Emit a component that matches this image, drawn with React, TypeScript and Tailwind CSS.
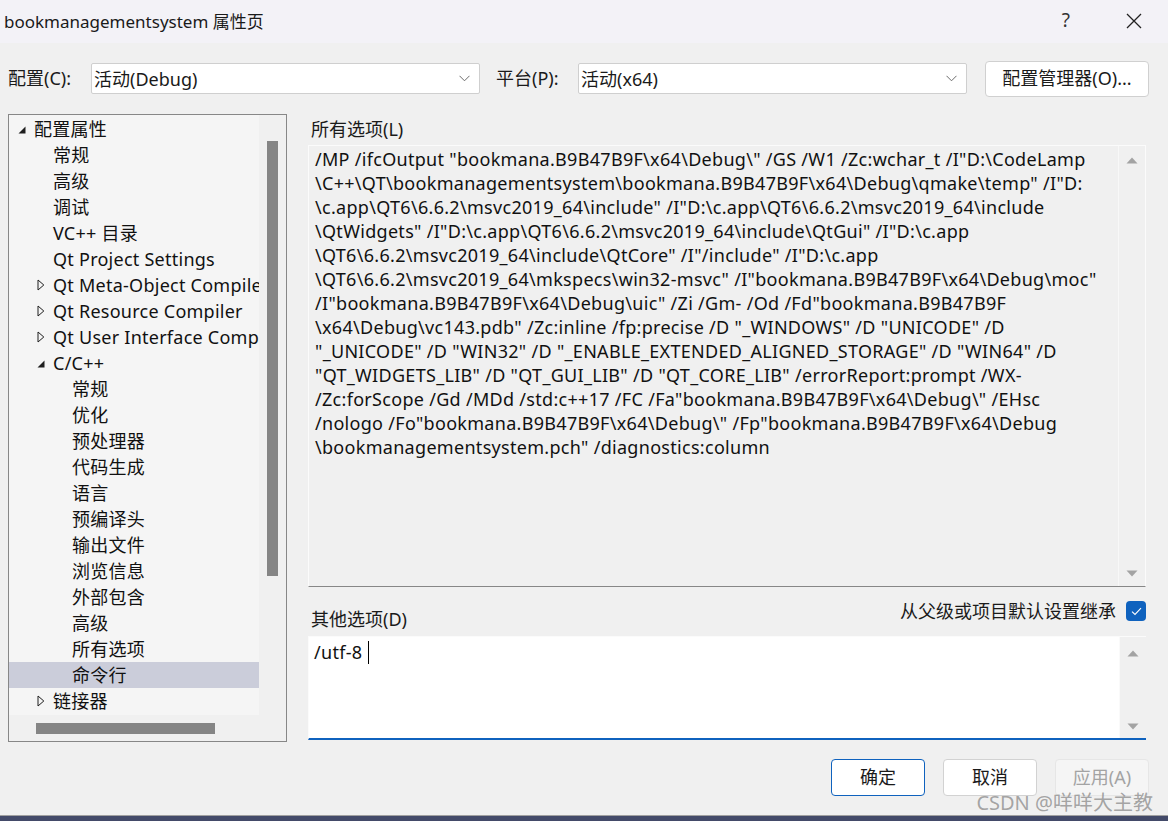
import React from "react";

// 属性页对话框 (VS 项目属性 -> C/C++ -> 命令行)
const FONT = "font-['Noto_Sans','Noto_Sans_CJK_SC',sans-serif]";

type TreeNode = {
  label: string;
  level: 0 | 1 | 2;
  arrow?: "open" | "closed";
  selected?: boolean;
};

const TREE: TreeNode[] = [
  { label: "配置属性", level: 0, arrow: "open" },
  { label: "常规", level: 1 },
  { label: "高级", level: 1 },
  { label: "调试", level: 1 },
  { label: "VC++ 目录", level: 1 },
  { label: "Qt Project Settings", level: 1 },
  { label: "Qt Meta-Object Compiler", level: 1, arrow: "closed" },
  { label: "Qt Resource Compiler", level: 1, arrow: "closed" },
  { label: "Qt User Interface Compiler", level: 1, arrow: "closed" },
  { label: "C/C++", level: 1, arrow: "open" },
  { label: "常规", level: 2 },
  { label: "优化", level: 2 },
  { label: "预处理器", level: 2 },
  { label: "代码生成", level: 2 },
  { label: "语言", level: 2 },
  { label: "预编译头", level: 2 },
  { label: "输出文件", level: 2 },
  { label: "浏览信息", level: 2 },
  { label: "外部包含", level: 2 },
  { label: "高级", level: 2 },
  { label: "所有选项", level: 2 },
  { label: "命令行", level: 2, selected: true },
  { label: "链接器", level: 1, arrow: "closed" },
];

const LEVEL_PAD: Record<number, string> = {
  0: "pl-[9px]",
  1: "pl-[28px]",
  2: "pl-[47px]",
};

const ALL_OPTIONS = [
  '/MP /ifcOutput "bookmana.B9B47B9F\\x64\\Debug\\" /GS /W1 /Zc:wchar_t /I"D:\\CodeLamp',
  '\\C++\\QT\\bookmanagementsystem\\bookmana.B9B47B9F\\x64\\Debug\\qmake\\temp" /I"D:',
  '\\c.app\\QT6\\6.6.2\\msvc2019_64\\include" /I"D:\\c.app\\QT6\\6.6.2\\msvc2019_64\\include',
  '\\QtWidgets" /I"D:\\c.app\\QT6\\6.6.2\\msvc2019_64\\include\\QtGui" /I"D:\\c.app',
  '\\QT6\\6.6.2\\msvc2019_64\\include\\QtCore" /I"/include" /I"D:\\c.app',
  '\\QT6\\6.6.2\\msvc2019_64\\mkspecs\\win32-msvc" /I"bookmana.B9B47B9F\\x64\\Debug\\moc"',
  '/I"bookmana.B9B47B9F\\x64\\Debug\\uic" /Zi /Gm- /Od /Fd"bookmana.B9B47B9F',
  '\\x64\\Debug\\vc143.pdb" /Zc:inline /fp:precise /D "_WINDOWS" /D "UNICODE" /D',
  '"_UNICODE" /D "WIN32" /D "_ENABLE_EXTENDED_ALIGNED_STORAGE" /D "WIN64" /D',
  '"QT_WIDGETS_LIB" /D "QT_GUI_LIB" /D "QT_CORE_LIB" /errorReport:prompt /WX-',
  '/Zc:forScope /Gd /MDd /std:c++17 /FC /Fa"bookmana.B9B47B9F\\x64\\Debug\\" /EHsc',
  '/nologo /Fo"bookmana.B9B47B9F\\x64\\Debug\\" /Fp"bookmana.B9B47B9F\\x64\\Debug',
  '\\bookmanagementsystem.pch" /diagnostics:column',
];

function Chevron() {
  return (
    <svg width="11" height="7" viewBox="0 0 11 7" className="shrink-0">
      <path d="M0.5 0.8 L5.5 5.8 L10.5 0.8" fill="none" stroke="#6b6b6b" strokeWidth="1" />
    </svg>
  );
}

function ScrollArrow({ dir }: { dir: "up" | "down" }) {
  return (
    <svg width="12" height="7" viewBox="0 0 12 7">
      {dir === "up" ? (
        <path d="M6 0.5 L11.5 6.5 L0.5 6.5 Z" fill="#a3a3a3" />
      ) : (
        <path d="M0.5 0.5 L11.5 0.5 L6 6.5 Z" fill="#a3a3a3" />
      )}
    </svg>
  );
}

function TreeArrow({ kind }: { kind?: "open" | "closed" }) {
  if (kind === "open") {
    return (
      <svg width="8" height="8" viewBox="0 0 8 8" className="mt-[2px]">
        <path d="M7.5 0.5 L7.5 7.5 L0.5 7.5 Z" fill="#1e1e1e" />
      </svg>
    );
  }
  if (kind === "closed") {
    return (
      <svg width="8" height="12" viewBox="0 0 8 12">
        <path d="M1 1 L6.8 6 L1 11 Z" fill="none" stroke="#1e1e1e" strokeWidth="1" />
      </svg>
    );
  }
  return null;
}

function Combo({ value, width }: { value: string; width: string }) {
  return (
    <div
      className={`${width} h-[31px] bg-white border border-[#cfcfcf] rounded-[2px] flex items-center pl-[2px] pr-[9px]`}
    >
      <span className="flex-1 text-[18px] text-[#1a1a1a] leading-none">{value}</span>
      <Chevron />
    </div>
  );
}

function Button({
  children,
  variant,
}: {
  children: React.ReactNode;
  variant: "primary" | "normal" | "disabled";
}) {
  const styles = {
    primary: "bg-white border-[#0f62be] text-[#1a1a1a]",
    normal: "bg-white border-[#d2d2d2] text-[#1a1a1a]",
    disabled: "bg-[#f5f5f5] border-[#e6e6e6] text-[#a3a3a3]",
  }[variant];
  return (
    <button
      className={`w-[94px] h-[37px] rounded-[4px] border text-[18px] flex items-center justify-center ${styles}`}
    >
      {children}
    </button>
  );
}

export default function App() {
  return (
    <div
      className={`${FONT} w-[1168px] h-[821px] flex flex-col bg-[#f0f0f0] text-[#1a1a1a] overflow-hidden relative`}
    >
      {/* 标题栏 */}
      <div className="h-[43px] shrink-0 bg-[#f3f2f7] flex items-center pl-[4px]">
        <span className="flex-1 text-[17px] text-[#1a1a1a]">bookmanagementsystem 属性页</span>
        <span className="text-[19px] text-[#333] mr-[56px] -mt-[3px]">?</span>
        <svg width="16" height="16" viewBox="0 0 16 16" className="mr-[26px] -mt-[2px]">
          <path d="M1 1 L15 15 M15 1 L1 15" stroke="#222" strokeWidth="1.3" />
        </svg>
      </div>

      <div className="flex-1 flex flex-col px-[8px] border-b border-[#a0a0a0]">
        {/* 配置 / 平台 */}
        <div className="mt-[20px] h-[31px] flex items-center">
          <span className="w-[83px] text-[18px]">配置(C):</span>
          <Combo value="活动(Debug)" width="w-[389px]" />
          <span className="ml-[16px] w-[82px] text-[18px]">平台(P):</span>
          <Combo value="活动(x64)" width="w-[389px]" />
          <button className="ml-[18px] w-[164px] h-[36px] bg-white border border-[#d0d0d0] rounded-[4px] text-[18px] flex items-center justify-center">
            配置管理器(O)...
          </button>
        </div>

        {/* 主体 */}
        <div className="mt-[20px] h-[628px] flex">
          {/* 树 */}
          <div className="w-[279px] h-full border border-[#878787] flex flex-col">
            <div className="h-[600px] flex">
              <div className="w-[250px] h-full bg-[#f5f5f5] pt-[1px] overflow-hidden">
                {TREE.map((n, i) => (
                  <div
                    key={i}
                    className={`h-[26px] flex items-center whitespace-nowrap ${LEVEL_PAD[n.level]} ${
                      n.selected ? "bg-[#cbcdda]" : ""
                    }`}
                  >
                    <div className="w-[16px] shrink-0 flex items-center">
                      <TreeArrow kind={n.arrow} />
                    </div>
                    <span className="text-[18px] leading-none tracking-[0.25px] text-[#111]">{n.label}</span>
                  </div>
                ))}
              </div>
              <div className="flex-1 bg-[#f0f0f0] pt-[26px] pl-[8px]">
                <div className="w-[11px] h-[435px] bg-[#858585]" />
              </div>
            </div>
            <div className="flex-1 pt-[8px] pl-[27px]">
              <div className="w-[179px] h-[11px] bg-[#858585]" />
            </div>
          </div>

          {/* 右侧 */}
          <div className="ml-[21px] w-[838px] flex flex-col">
            <div className="h-[31px] flex items-center pl-[3px] text-[18px]">所有选项(L)</div>
            <div className="h-[442px] flex border border-[#fbfbfb] border-b-[#878787] bg-[#f0f0f0]">
              <div className="flex-1 pl-[6px] pt-[1px] overflow-hidden">
                {ALL_OPTIONS.map((l, i) => (
                  <div
                    key={i}
                    className="h-[24px] leading-[24px] text-[18px] tracking-[0.3px] whitespace-nowrap text-[#111]"
                  >
                    {l}
                  </div>
                ))}
              </div>
              <div className="w-[27px] border-l border-[#f8f8f8] flex flex-col items-center justify-between pt-[11px] pb-[9px]">
                <ScrollArrow dir="up" />
                <ScrollArrow dir="down" />
              </div>
            </div>

            <div className="h-[49px] flex">
              <span className="flex-1 mt-[20px] pl-[3px] text-[18px] leading-[24px]">其他选项(D)</span>
              <div className="mt-[14px] flex items-start">
                <span className="text-[18px] leading-[20px] mr-[10px]">从父级或项目默认设置继承</span>
                <div className="w-[20px] h-[20px] rounded-[4px] bg-[#0f62be] flex items-center justify-center">
                  <svg width="11" height="9" viewBox="0 0 11 9">
                    <path d="M1 4.6 L4 7.4 L10 1.2" fill="none" stroke="#fff" strokeWidth="1.1" />
                  </svg>
                </div>
              </div>
            </div>

            <div className="h-[104px] flex bg-white border-t border-l border-[#fbfbfb] border-b-2 border-b-[#0f62be]">
              <div className="flex-1 pl-[5px] pt-[3px] flex items-start">
                <span className="text-[18px] leading-[24px] tracking-[0.3px] text-[#111]">/utf-8</span>
                <span className="ml-[6px] mt-[1px] w-[1px] h-[23px] bg-black" />
              </div>
              <div className="w-[27px] bg-[#f0f0f0] border-l border-[#fafafa] flex flex-col items-center justify-between pt-[13px] pb-[8px]">
                <ScrollArrow dir="up" />
                <ScrollArrow dir="down" />
              </div>
            </div>
          </div>
        </div>

        {/* 按钮 */}
        <div className="mt-[17px] flex justify-end gap-[18px] pr-[11px]">
          <Button variant="primary">确定</Button>
          <Button variant="normal">取消</Button>
          <Button variant="disabled">应用(A)</Button>
        </div>
      </div>

      <div className="h-[5px] shrink-0 bg-[#434a69]" />

      {/* 水印 */}
      <div className="absolute right-[15px] bottom-[8px] text-[20px] leading-none text-[#9a9a9a]/90 pointer-events-none">
        CSDN @咩咩大主教
      </div>
    </div>
  );
}
